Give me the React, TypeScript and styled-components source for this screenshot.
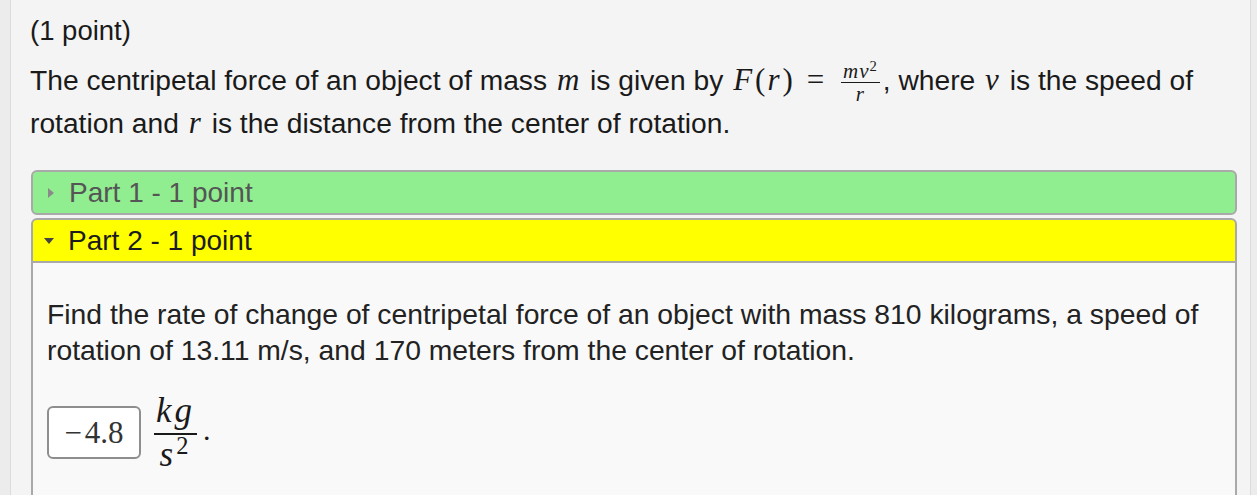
import React from 'react';
import styled, { createGlobalStyle } from 'styled-components';

const GlobalStyle = createGlobalStyle`
  html, body {
    margin: 0;
    padding: 0;
    background: #ececec;
  }
  body {
    font-family: 'Liberation Sans', Arial, sans-serif;
    color: #1a1a1a;
  }
`;

const Panel = styled.div`
  margin-left: 10px;
  width: 1241px;
  min-height: 495px;
  box-sizing: border-box;
  background: #f4f4f4;
  border-left: 1px solid #dcdcdc;
  border-right: 1px solid #dcdcdc;
  padding: 16px 13px 0 19px;
  overflow: hidden;
`;

const Points = styled.p`
  margin: 0;
  font-size: 27.5px;
  line-height: 30px;
`;

const Intro = styled.p`
  margin: 14px 0 0;
  font-size: 28.2px;
  line-height: 41px;
  white-space: nowrap;
`;

const MathVar = styled.span`
  font-family: 'Liberation Serif', 'Times New Roman', serif;
  font-style: italic;
  font-size: 31px;
  line-height: 1;
  padding: 0 3px 0 2px;
`;

const MathUp = styled.span<{ $pad?: number }>`
  font-family: 'Liberation Serif', 'Times New Roman', serif;
  font-size: 31px;
  line-height: 1;
  padding: 0 ${(p) => p.$pad ?? 0}px;
`;

const Frac = styled.span<{ $size: number; $space: number }>`
  display: inline-flex;
  flex-direction: column;
  align-items: center;
  vertical-align: middle;
  font-family: 'Liberation Serif', 'Times New Roman', serif;
  font-style: italic;
  font-size: ${(p) => p.$size}px;
  line-height: 0.9;
  letter-spacing: ${(p) => p.$space}px;
  margin: 0 3px;
`;

const Num = styled.span<{ $rule: number; $gap: number }>`
  padding: 0 2px ${(p) => p.$gap}px;
  border-bottom: ${(p) => p.$rule}px solid #1a1a1a;
`;

const Den = styled.span<{ $gap: number }>`
  padding: ${(p) => p.$gap}px 2px 0;
`;

const Sup = styled.sup`
  font-style: normal;
  font-size: 0.7em;
  line-height: 0;
  vertical-align: 0.5em;
`;

const Parts = styled.div`
  margin-top: 26px;
  margin-left: 1px;
  display: flex;
  flex-direction: column;
`;

const PartHeader = styled.div<{ $bg: string; $open?: boolean }>`
  display: flex;
  align-items: center;
  height: 45px;
  box-sizing: border-box;
  margin-bottom: ${(p) => (p.$open ? 0 : 3)}px;
  padding-left: ${(p) => (p.$open ? 11 : 15)}px;
  background: ${(p) => p.$bg};
  border: 2px solid #a9a9a9;
  border-radius: ${(p) => (p.$open ? '6px 6px 0 0' : '6px')};
  font-size: 28px;
  color: ${(p) => (p.$open ? '#1c1c1c' : '#555')};
`;

const Caret = styled.span<{ $open?: boolean }>`
  width: 0;
  height: 0;
  ${(p) =>
    p.$open
      ? `border-left: 5px solid transparent;
         border-right: 5px solid transparent;
         border-top: 6px solid #444;
         margin-right: 14px;`
      : `border-top: 5px solid transparent;
         border-bottom: 5px solid transparent;
         border-left: 6px solid #8a8a8a;
         margin-right: 15px;`}
`;

const PartBody = styled.div`
  min-height: 240px;
  background: #f9f9f9;
  border-left: 2px solid #a9a9a9;
  border-right: 2px solid #a9a9a9;
  padding: 33px 14px 0;
`;

const Question = styled.p`
  margin: 0;
  font-size: 28.3px;
  line-height: 36px;
  color: #222;
  white-space: nowrap;
`;

const AnswerRow = styled.div`
  margin-top: 38px;
  height: 53px;
  display: flex;
  align-items: center;
`;

const AnswerBox = styled.div`
  width: 94px;
  height: 53px;
  box-sizing: border-box;
  border: 2px solid #8e8e8e;
  border-radius: 6px;
  background: #fff;
  display: flex;
  align-items: center;
  justify-content: center;
  font-family: 'Liberation Serif', 'Times New Roman', serif;
  font-size: 31px;
  color: #333;
  margin-right: 10px;
`;

const Minus = styled.span`
  margin-right: 3px;
`;

const Period = styled.span`
  font-family: 'Liberation Serif', 'Times New Roman', serif;
  font-size: 30px;
  margin-left: 3px;
  margin-bottom: 6px;
`;

export default function App() {
  return (
    <>
      <GlobalStyle />
      <Panel>
        <Points>(1 point)</Points>
        <Intro>
          The centripetal force of an object of mass <MathVar>m</MathVar> is given by{' '}
          <MathVar>F</MathVar>
          <MathUp>(</MathUp>
          <MathVar>r</MathVar>
          <MathUp>)</MathUp> <MathUp $pad={6}>=</MathUp>{' '}
          <Frac $size={21} $space={1}>
            <Num $rule={1} $gap={1}>
              mv<Sup>2</Sup>
            </Num>
            <Den $gap={2}>r</Den>
          </Frac>
          , where <MathVar>v</MathVar> is the speed of
          <br />
          rotation and <MathVar>r</MathVar> is the distance from the center of rotation.
        </Intro>
        <Parts>
          <PartHeader $bg="#90ee90">
            <Caret />
            Part 1 - 1 point
          </PartHeader>
          <PartHeader $bg="#ffff00" $open>
            <Caret $open />
            Part 2 - 1 point
          </PartHeader>
          <PartBody>
            <Question>
              Find the rate of change of centripetal force of an object with mass 810 kilograms, a
              speed of
              <br />
              rotation of 13.11 m/s, and 170 meters from the center of rotation.
            </Question>
            <AnswerRow>
              <AnswerBox>
                <Minus>−</Minus>4.8
              </AnswerBox>
              <Frac $size={35} $space={3}>
                <Num $rule={2} $gap={6}>kg</Num>
                <Den $gap={4}>
                  s<Sup>2</Sup>
                </Den>
              </Frac>
              <Period>.</Period>
            </AnswerRow>
          </PartBody>
        </Parts>
      </Panel>
    </>
  );
}
